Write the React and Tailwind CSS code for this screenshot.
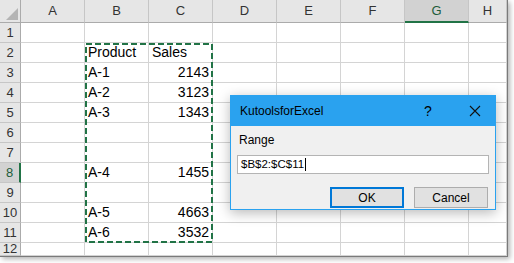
import React from 'react';

const cols = ['A', 'B', 'C', 'D', 'E', 'F', 'G', 'H'];

const data = {
  2: ['Product', 'Sales'],
  3: ['A-1', '2143'],
  4: ['A-2', '3123'],
  5: ['A-3', '1343'],
  8: ['A-4', '1455'],
  10: ['A-5', '4663'],
  11: ['A-6', '3532'],
};

const rows = [1, 2, 3, 4, 5, 6, 7, 8, 9, 10, 11, 12];

function Dialog() {
  return (
    <div className="absolute left-[230px] top-[95px] w-[266px] h-[115px] border border-[#2aa2ef] bg-[#f0f0f0] shadow-[0_3px_12px_rgba(0,0,0,0.28)] flex flex-col text-[12px] text-black">
      <div className="h-[30px] bg-[#2aa2ef] flex items-center pl-[9px] pr-[14px] shrink-0">
        <span className="flex-1">KutoolsforExcel</span>
        <span className="w-[10px] text-center text-[14px] mr-[36px]">?</span>
        <svg width="12" height="12" viewBox="0 0 12 12">
          <path d="M1 1 L11 11 M11 1 L1 11" stroke="#111" strokeWidth="1.1" />
        </svg>
      </div>
      <div className="flex flex-col px-[6px] pt-[7px]">
        <div className="leading-[14px] pl-[2px]">Range</div>
        <div className="mt-[8px] h-[19px] bg-white border border-[#b4b4b4] flex items-center pl-[3px] text-[11.5px]">
          <span>$B$2:$C$11</span>
          <span className="w-px h-[13px] bg-black ml-[1px]" />
        </div>
        <div className="flex justify-end gap-[10px] mt-[13px] pr-[1px]">
          <button className="w-[74px] h-[21px] border-2 border-[#0078d7] bg-[#e1e1e1] text-[12px]">OK</button>
          <button className="w-[74px] h-[21px] border border-[#adadad] bg-[#e1e1e1] text-[12px]">Cancel</button>
        </div>
      </div>
    </div>
  );
}

export default function App() {
  return (
    <div className="w-[514px] h-[263px] bg-white relative overflow-hidden" style={{ fontFamily: '"Liberation Sans", Arial, sans-serif' }}>
      <div className="w-[508px] h-[257px] border-r border-b border-[#7a7a7a] shadow-[2px_2px_5px_rgba(0,0,0,0.3)] overflow-hidden relative bg-white">
        <div className="grid grid-cols-[21px_repeat(7,64px)_38px] grid-rows-[23px_repeat(11,20px)_13px]">
          <div className="bg-[#e6e6e6] border-r border-b border-[#ababab] relative">
            <svg className="absolute right-[2px] bottom-[2px]" width="12" height="12" viewBox="0 0 12 12">
              <path d="M12 0 L12 12 L0 12 Z" fill="#b4b4b4" />
            </svg>
          </div>
          {cols.map((c) => (
            <div
              key={c}
              className={
                c === 'G'
                  ? 'bg-[#d2d2d2] border-r border-[#c6c6c6] border-b-2 border-b-[#217346] flex items-center justify-center text-[13px] text-[#1d5c3a]'
                  : 'bg-[#e6e6e6] border-r border-b border-[#ababab] border-r-[#c6c6c6] flex items-center justify-center text-[13px] text-[#333]'
              }
            >
              {c}
            </div>
          ))}
          {rows.map((r) => (
            <React.Fragment key={r}>
              <div
                className={
                  r === 8
                    ? 'bg-[#d2d2d2] border-r-2 border-[#217346] border-b border-b-[#c6c6c6] flex items-center justify-center text-[13px] text-[#1d5c3a]'
                    : 'bg-[#e6e6e6] border-r border-b border-[#ababab] border-b-[#c6c6c6] flex items-center justify-center text-[13px] text-[#333]'
                }
              >
                {r}
              </div>
              {cols.map((c, i) => {
                const v = data[r] && (i === 1 ? data[r][0] : i === 2 ? data[r][1] : null);
                const num = v && /^\d+$/.test(v);
                return (
                  <div
                    key={c}
                    className={
                      'border-r border-b border-[#d4d4d4] flex items-end pb-[2px] px-[3px] text-[14px] leading-[16px] text-black ' +
                      (num ? 'justify-end' : 'justify-start')
                    }
                  >
                    {v}
                  </div>
                );
              })}
            </React.Fragment>
          ))}
        </div>
        <svg className="absolute left-0 top-0 pointer-events-none" width="508" height="257">
          <rect x="86" y="44" width="126" height="198" fill="none" stroke="#217346" strokeWidth="2" strokeDasharray="6 3" />
        </svg>
      </div>
      <Dialog />
    </div>
  );
}
